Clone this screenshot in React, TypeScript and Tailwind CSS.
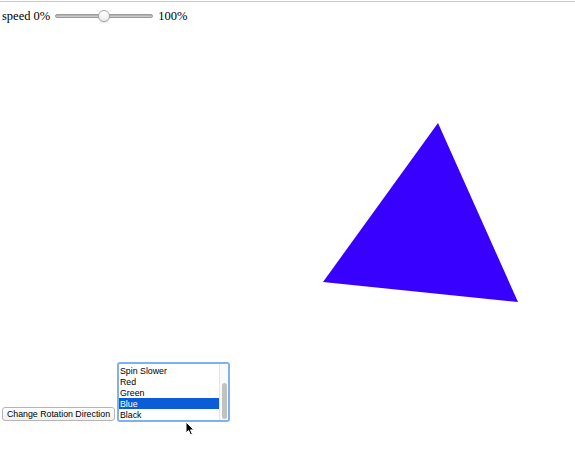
export default function App() {
  const options = ["Spin Slower", "Red", "Green", "Blue", "Black"];

  return (
    <div className="w-[575px] h-[458px] bg-white flex flex-col overflow-hidden relative">
      <div className="h-px bg-[#c9c9c9] mt-px" />

      {/* speed control */}
      <div className="flex items-center h-[28px] pl-[2px] text-[12.5px] text-black font-['Liberation_Serif',serif]">
        <span>speed 0%</span>
        <div className="relative w-[98px] h-[14px] ml-[5px] mr-[5px] flex items-center">
          <div className="w-full h-[4px] rounded-full bg-gradient-to-b from-[#a9a9a9] to-[#d6d6d6] border border-[#9b9b9b]" />
          <div className="absolute left-[43px] top-[1px] w-[12px] h-[12px] rounded-full bg-gradient-to-b from-white to-[#ececec] border border-[#a6a6a6] shadow-[0_1px_1px_rgba(0,0,0,0.15)]" />
        </div>
        <span>100%</span>
      </div>

      {/* canvas */}
      <svg width="575" height="332" className="block">
        <polygon points="438,93 323,252 518,272" fill="#3700ff" />
      </svg>

      {/* controls */}
      <div className="flex items-end pl-[2px] font-['Liberation_Sans',Arial,sans-serif] text-[8.8px] text-black">
        <button
          type="button"
          className="h-[14px] w-[113px] mb-[1px] rounded-[3px] border border-[#b5b5b5] bg-gradient-to-b from-white to-[#f1f1f1] flex items-center justify-center leading-none"
        >
          Change Rotation Direction
        </button>
        <div className="ml-[2px] w-[113px] h-[60px] rounded-[3px] border-2 border-[#7fb0ef] bg-white flex pt-[1px]">
          <div className="flex-1 flex flex-col overflow-hidden">
            {options.map((o) => (
              <div
                key={o}
                className={
                  o === "Blue"
                    ? "h-[11px] shrink-0 leading-[12px] pl-[1px] bg-[#0b5dd7] text-white"
                    : "h-[11px] shrink-0 leading-[12px] pl-[1px]"
                }
              >
                {o}
              </div>
            ))}
          </div>
          <div className="w-[9px] -mt-px border-l border-[#e6e6e6] bg-[#fafafa] flex flex-col justify-end pb-px items-center">
            <div className="w-[5px] h-[36px] rounded-full bg-[#c2c2c2]" />
          </div>
        </div>
      </div>

      {/* mouse pointer */}
      <svg
        className="absolute left-[185px] top-[421px]"
        width="11"
        height="15"
        viewBox="0 0 11 15"
      >
        <path
          d="M1 1 L1 12 L3.6 9.6 L5.6 14 L7.4 13.2 L5.5 8.9 L9 8.9 Z"
          fill="#000"
          stroke="#fff"
          strokeWidth="1"
          strokeLinejoin="round"
        />
      </svg>
    </div>
  );
}
